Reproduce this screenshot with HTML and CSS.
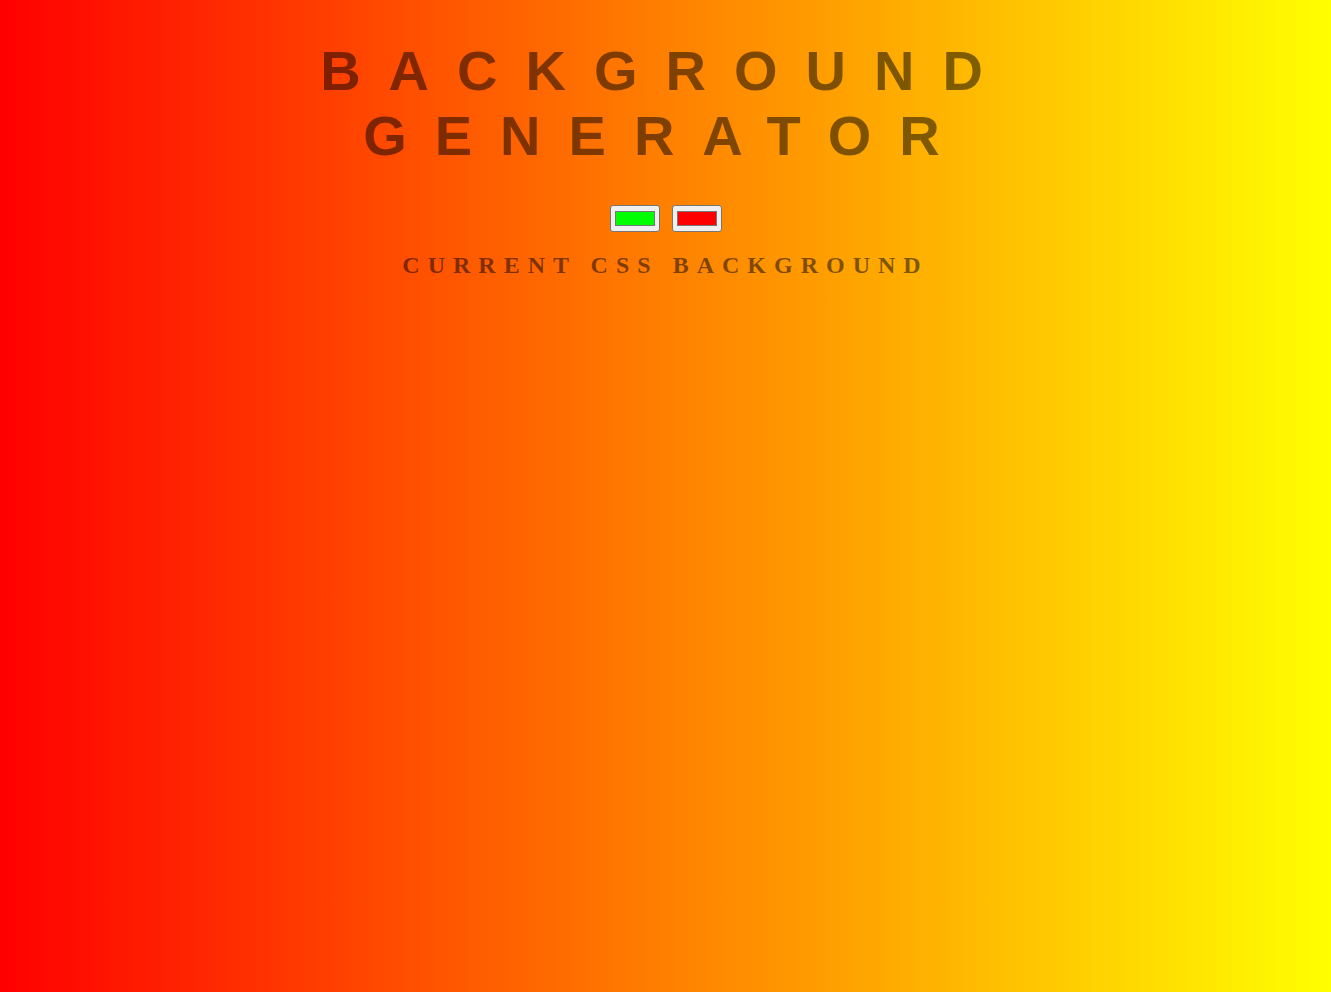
FILE: index.html
```html
<!DOCTYPE html>
<html lang="en">
<head>
	<meta charset="utf-8">
	<title>Background Generator</title>
	<link rel="stylesheet" href="styles.css">
</head>
<body class="gradient">
	<h1 class="title">Background Generator</h1>
	<input class="color1 picker" type="color" name="color1" value="#00ff00">
	<input class="color2 picker" type="color" name="color2" value="#ff0000">
	<h2 class="subtitle">Current CSS Background</h2>
	<h3 class="css-output"></h3>
</body>
</html>
```
FILE: styles.css
```css
body {
	margin: 0 8px;
	font-family: "Liberation Serif", "Times New Roman", serif;
	color: rgba(0, 0, 0, .5);
	text-align: center;
	text-transform: uppercase;
	letter-spacing: .5em;
}

.gradient {
	background: linear-gradient(to right, #ff0000, #ffff00);
}

.title {
	font: bold 3.5em "Liberation Sans", Arial, sans-serif;
	color: rgba(0, 0, 0, .5);
	letter-spacing: 0.5em;
	width: 100%;
}

.picker {
	box-sizing: border-box;
	width: 50px;
	height: 27px;
	padding: 1px 2px;
	background-color: #efefef;
	border: 1px solid #767676;
	border-radius: 3px;
	vertical-align: baseline;
}

.picker::-webkit-color-swatch-wrapper {
	padding: 4px 2px;
}

.picker::-webkit-color-swatch {
	border: 1px solid #777777;
	border-radius: 0;
}

.subtitle {
	font-weight: bold;
}

.css-output {
	font: 900 1em "Liberation Sans", Arial, sans-serif;
	color: rgba(0, 0, 0, .5);
	letter-spacing: 0.2em;
}
```
